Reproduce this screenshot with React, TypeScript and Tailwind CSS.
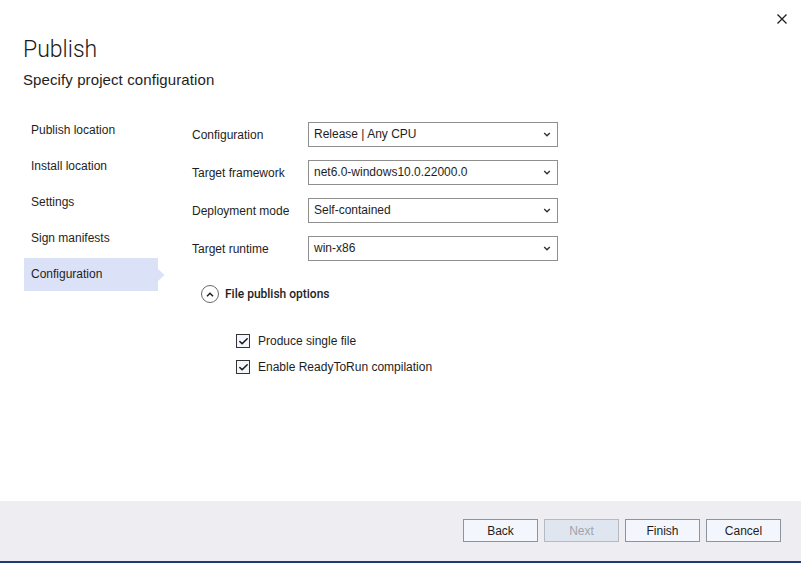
import { Check } from 'lucide-react'

const navItems = ['Publish location', 'Install location', 'Settings', 'Sign manifests', 'Configuration']

const fields = [
    { label: 'Configuration', value: 'Release | Any CPU' },
    { label: 'Target framework', value: 'net6.0-windows10.0.22000.0' },
    { label: 'Deployment mode', value: 'Self-contained' },
    { label: 'Target runtime', value: 'win-x86' },
]

function Chevron() {
    return (
        <svg width="8" height="5" viewBox="0 0 8 5" className="text-[#333]">
            <path d="M1.2 0.9 L4 3.7 L6.8 0.9" fill="none" stroke="currentColor" strokeWidth="1.4" />
        </svg>
    )
}

function CheckRow({ label }: { label: string }) {
    return (
        <div className="flex items-center h-[14px]">
            <div className="w-[14px] h-[14px] border border-[#333] bg-[#f3f6fd] flex items-center justify-center">
                <Check className="w-[11px] h-[11px] text-[#1a1a1a]" strokeWidth={3.4} />
            </div>
            <span className="ml-[8px] text-[12px] text-[#1e1e1e]">{label}</span>
        </div>
    )
}

export default function App() {
    return (
        <div className="w-[801px] h-[563px] flex flex-col bg-white text-[#1e1e1e] font-['Liberation_Sans',Arial,sans-serif]">
            <div className="flex-1 flex flex-col">
                <div className="flex justify-end pt-[14px] pr-[14px] h-[36px]">
                    <svg width="10" height="10" viewBox="0 0 10 10">
                        <path d="M0.5 0.5 L9.5 9.5 M9.5 0.5 L0.5 9.5" stroke="#1e1e1e" strokeWidth="1.3" />
                    </svg>
                </div>

                <div className="px-[23px]">
                    <h1 className="text-[23px] leading-[28px] font-light font-['Roboto',sans-serif] text-[#1a1a1a]">Publish</h1>
                    <p className="mt-[6px] text-[15px] leading-[20px] tracking-[0.1px]">Specify project configuration</p>
                </div>

                <div className="flex mt-[24px]">
                    <nav className="ml-[24px] w-[141px] flex flex-col gap-[3px]">
                        {navItems.map((item) => {
                            const active = item === 'Configuration'
                            return (
                                <div key={item} className="flex items-center h-[33px]">
                                    <div className={`w-[134px] h-[33px] pl-[7px] pt-[9px] text-[12px] leading-[15px] ${active ? 'bg-[#dbe2f7]' : ''}`}>
                                        {item}
                                    </div>
                                    {active && (
                                        <svg width="7" height="12" viewBox="0 0 7 12">
                                            <path d="M0 0 L6.5 6 L0 12 Z" fill="#dbe2f7" />
                                        </svg>
                                    )}
                                </div>
                            )
                        })}
                    </nav>

                    <div className="ml-[27px] pt-[8px] flex flex-col">
                        <div className="flex flex-col gap-[13px]">
                            {fields.map((f) => (
                                <div key={f.label} className="flex items-center h-[25px]">
                                    <span className="w-[116px] text-[12px]">{f.label}</span>
                                    <div className="w-[250px] h-[25px] border border-[#8f8f8f] bg-white flex items-center justify-between pl-[5px] pr-[6px]">
                                        <span className="text-[12px] leading-[15px] pb-[1px]">{f.value}</span>
                                        <Chevron />
                                    </div>
                                </div>
                            ))}
                        </div>

                        <div className="mt-[24px] ml-[9px] flex items-center h-[18px]">
                            <div className="w-[18px] h-[18px] rounded-full border border-[#6a6a6a] flex items-center justify-center">
                                <svg width="8" height="5" viewBox="0 0 8 5">
                                    <path d="M1 4.2 L4 1.2 L7 4.2" fill="none" stroke="#1e1e1e" strokeWidth="1.5" />
                                </svg>
                            </div>
                            <span className="ml-[6px] text-[12px] font-medium font-['Roboto',sans-serif]">File publish options</span>
                        </div>

                        <div className="mt-[31px] ml-[44px] flex flex-col gap-[12px]">
                            <CheckRow label="Produce single file" />
                            <CheckRow label="Enable ReadyToRun compilation" />
                        </div>
                    </div>
                </div>
            </div>

            <div className="h-[62px] bg-[#eeeef2] border-b-2 border-[#1f3c78] flex items-start justify-end pt-[18px] pr-[20px] gap-[6px]">
                {['Back', 'Next', 'Finish', 'Cancel'].map((b) => {
                    const disabled = b === 'Next'
                    return (
                        <button
                            key={b}
                            className={`w-[75px] h-[23px] border text-[12px] ${disabled ? 'bg-[#dfe6ef] border-[#b4bac4] text-[#a0a4ab]' : 'bg-[#f3f6fd] border-[#8d94a1] text-[#1e1e1e]'}`}
                        >
                            {b}
                        </button>
                    )
                })}
            </div>
        </div>
    )
}
